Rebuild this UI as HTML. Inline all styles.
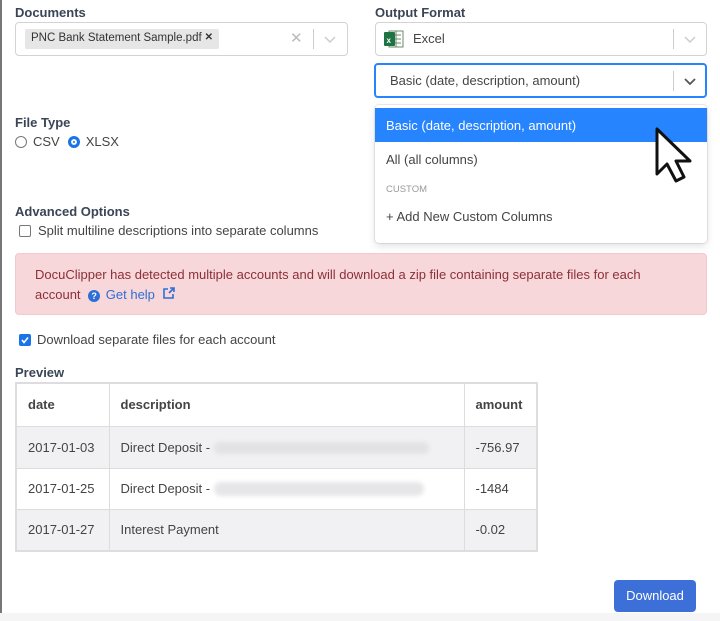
<!DOCTYPE html>
<html><head><style>
*{box-sizing:border-box;margin:0;padding:0}
body{width:720px;height:621px;background:#fff;font-family:"Liberation Sans",sans-serif;color:#3c4858;position:relative;overflow:hidden;font-size:13px}
.a{position:absolute}
.lbl{font-weight:bold;font-size:13px;color:#3a4555}
.box{border:1px solid #d3d3d3;border-radius:4px;background:#fff}
.sep{position:absolute;width:1px;height:20px;background:#ccc}
td{border:1px solid #dcdcdc;padding:0 11px;font-size:13px;color:#444;white-space:nowrap}
table{border-collapse:collapse;border:2px solid #ddd;table-layout:fixed}
</style></head><body>
<div class="a" style="left:0;top:0;width:2px;height:621px;background:#777"></div>
<div class="a lbl" style="left:15px;top:5px">Documents</div>
<div class="a box" style="left:15px;top:22px;width:333px;height:34px">
 <div class="a" style="left:9px;top:6px;width:194px;height:20px;background:#e6e6e6;border-radius:2px;font-size:11.5px;color:#333;padding:3px 6px;white-space:nowrap">PNC Bank Statement Sample.pdf <span style="position:absolute;right:6px;top:3px;font-size:10px;font-weight:bold">✕</span></div>
 <div class="a" style="left:274px;top:6px;color:#bbb;font-size:15px">✕</div>
 <div class="sep" style="left:297px;top:6px"></div>
 <svg class="a" style="left:307px;top:11px" width="14" height="10"><path d="M2 3l5 5 5-5" fill="none" stroke="#ccc" stroke-width="1.5"/></svg>
</div>
<div class="a lbl" style="left:375px;top:5px">Output Format</div>
<div class="a box" style="left:375px;top:22px;width:332px;height:34px">
 <svg class="a" style="left:7px;top:6px" width="22" height="20"><rect x="6" y="2" width="14" height="16" fill="#fff" stroke="#6b8a6b"/><path d="M9 6h9M9 10h9M9 14h9M13 2v16" stroke="#6b8a6b"/><rect x="1" y="3" width="11" height="14" rx="1" fill="#1f7244"/><text x="3.5" y="14" font-size="8" fill="#fff" font-family="Liberation Sans" font-weight="bold">x</text></svg>
 <div class="a" style="left:37px;top:8px;font-size:13px;color:#444">Excel</div>
 <div class="sep" style="left:297px;top:6px"></div>
 <svg class="a" style="left:307px;top:11px" width="14" height="10"><path d="M2 3l5 5 5-5" fill="none" stroke="#ccc" stroke-width="1.5"/></svg>
</div>
<div class="a" style="left:374px;top:63px;width:333px;height:35px;border:2px solid #2684ff;border-radius:4px">
 <div class="a" style="left:14px;top:8px;font-size:13px;color:#444">Basic (date, description, amount)</div>
 <div class="sep" style="left:297px;top:6px"></div>
 <svg class="a" style="left:307px;top:11px" width="14" height="10"><path d="M2 3l5 5 5-5" fill="none" stroke="#555" stroke-width="1.8"/></svg>
</div>
<div class="a" style="left:375px;top:105px;width:332px;height:138px;background:#fff;border-radius:4px;box-shadow:0 0 0 1px rgba(0,0,0,.08),0 3px 8px rgba(0,0,0,.12)">
 <div class="a" style="left:0;top:3px;width:332px;height:34px;background:#2684ff;color:#fff;padding:10px 11px;font-size:13px">Basic (date, description, amount)</div>
 <div class="a" style="left:11px;top:47px;font-size:13px;color:#444">All (all columns)</div>
 <div class="a" style="left:11px;top:79px;font-size:9.5px;color:#999">CUSTOM</div>
 <div class="a" style="left:11px;top:104px;font-size:13px;color:#444">+ Add New Custom Columns</div>
</div>
<svg class="a" style="left:652px;top:126px" width="42" height="58"><path d="M5 3L5 48L15 38L24 55L32 51L24 35L38 35Z" fill="#fff" stroke="#111" stroke-width="3" stroke-linejoin="round"/></svg>
<div class="a lbl" style="left:15px;top:115px">File Type</div>
<div class="a" style="left:15px;top:134px;font-size:13px;color:#444;display:flex;align-items:center">
 <span style="width:12px;height:12px;border:1px solid #777;border-radius:50%;display:inline-block;margin-right:6px"></span>CSV
 <span style="width:12px;height:12px;border:3px solid #1a73e8;border-radius:50%;display:inline-block;margin:0 6px 0 8px;box-shadow:inset 0 0 0 2px #fff;background:#1a73e8"></span>XLSX
</div>
<div class="a lbl" style="left:15px;top:204px">Advanced Options</div>
<div class="a" style="left:19px;top:223px;font-size:13px;color:#444;display:flex;align-items:center"><span style="width:12px;height:12px;border:1px solid #777;border-radius:2px;display:inline-block;margin-right:7px"></span>Split multiline descriptions into separate columns</div>
<div class="a" style="left:15px;top:253px;width:692px;height:62px;background:#f8d7da;border:1px solid #f3c9cd;border-radius:4px;color:#8a3038;font-size:13px;line-height:20px;padding:11px 19px">DocuClipper has detected multiple accounts and will download a zip file containing separate files for each account <span style="color:#2d6fd6"><span style="display:inline-block;width:12px;height:12px;border-radius:50%;background:#2d6fd6;color:#fff;font-size:9px;line-height:12px;text-align:center;font-weight:bold;margin:0 2px 0 4px">?</span> Get help <svg width="13" height="13" style="vertical-align:-1px;margin-left:3px"><path d="M6 2H2v9h9V7M7 6l5-5M8 1h4v4" fill="none" stroke="#2d6fd6" stroke-width="1.6"/></svg></span></div>
<div class="a" style="left:19px;top:332px;font-size:13px;color:#444;display:flex;align-items:center"><span style="width:12px;height:12px;background:#1a73e8;border-radius:2px;display:inline-block;margin-right:6px;position:relative"><svg width="12" height="12" style="position:absolute;left:0;top:0"><path d="M3 6l2 2.5 4-5" fill="none" stroke="#fff" stroke-width="1.6"/></svg></span>Download separate files for each account</div>
<div class="a lbl" style="left:15px;top:365px">Preview</div>
<table class="a" style="left:15px;top:382px;width:521px">
<colgroup><col style="width:93px"><col style="width:355px"><col style="width:73px"></colgroup>
<tr style="height:43px"><td style="font-weight:bold">date</td><td style="font-weight:bold">description</td><td style="font-weight:bold">amount</td></tr>
<tr style="height:42px;background:#f1f1f3"><td>2017-01-03</td><td>Direct Deposit - <span style="display:inline-block;width:215px;height:12px;background:#e2e2e4;border-radius:6px;vertical-align:middle;filter:blur(2px)"></span></td><td>-756.97</td></tr>
<tr style="height:41px"><td>2017-01-25</td><td>Direct Deposit - <span style="display:inline-block;width:210px;height:14px;background:#e6e6e8;border-radius:7px;vertical-align:middle;filter:blur(2px)"></span></td><td>-1484</td></tr>
<tr style="height:42px;background:#f1f1f3"><td>2017-01-27</td><td>Interest Payment</td><td>-0.02</td></tr>
</table>
<div class="a" style="left:614px;top:580px;width:82px;height:32px;background:#3d6fd9;border-radius:4px;color:#fff;font-size:13px;text-align:center;line-height:32px">Download</div>
<div class="a" style="left:0;top:613px;width:720px;height:8px;background:#f5f5f5"></div>
</body></html>
